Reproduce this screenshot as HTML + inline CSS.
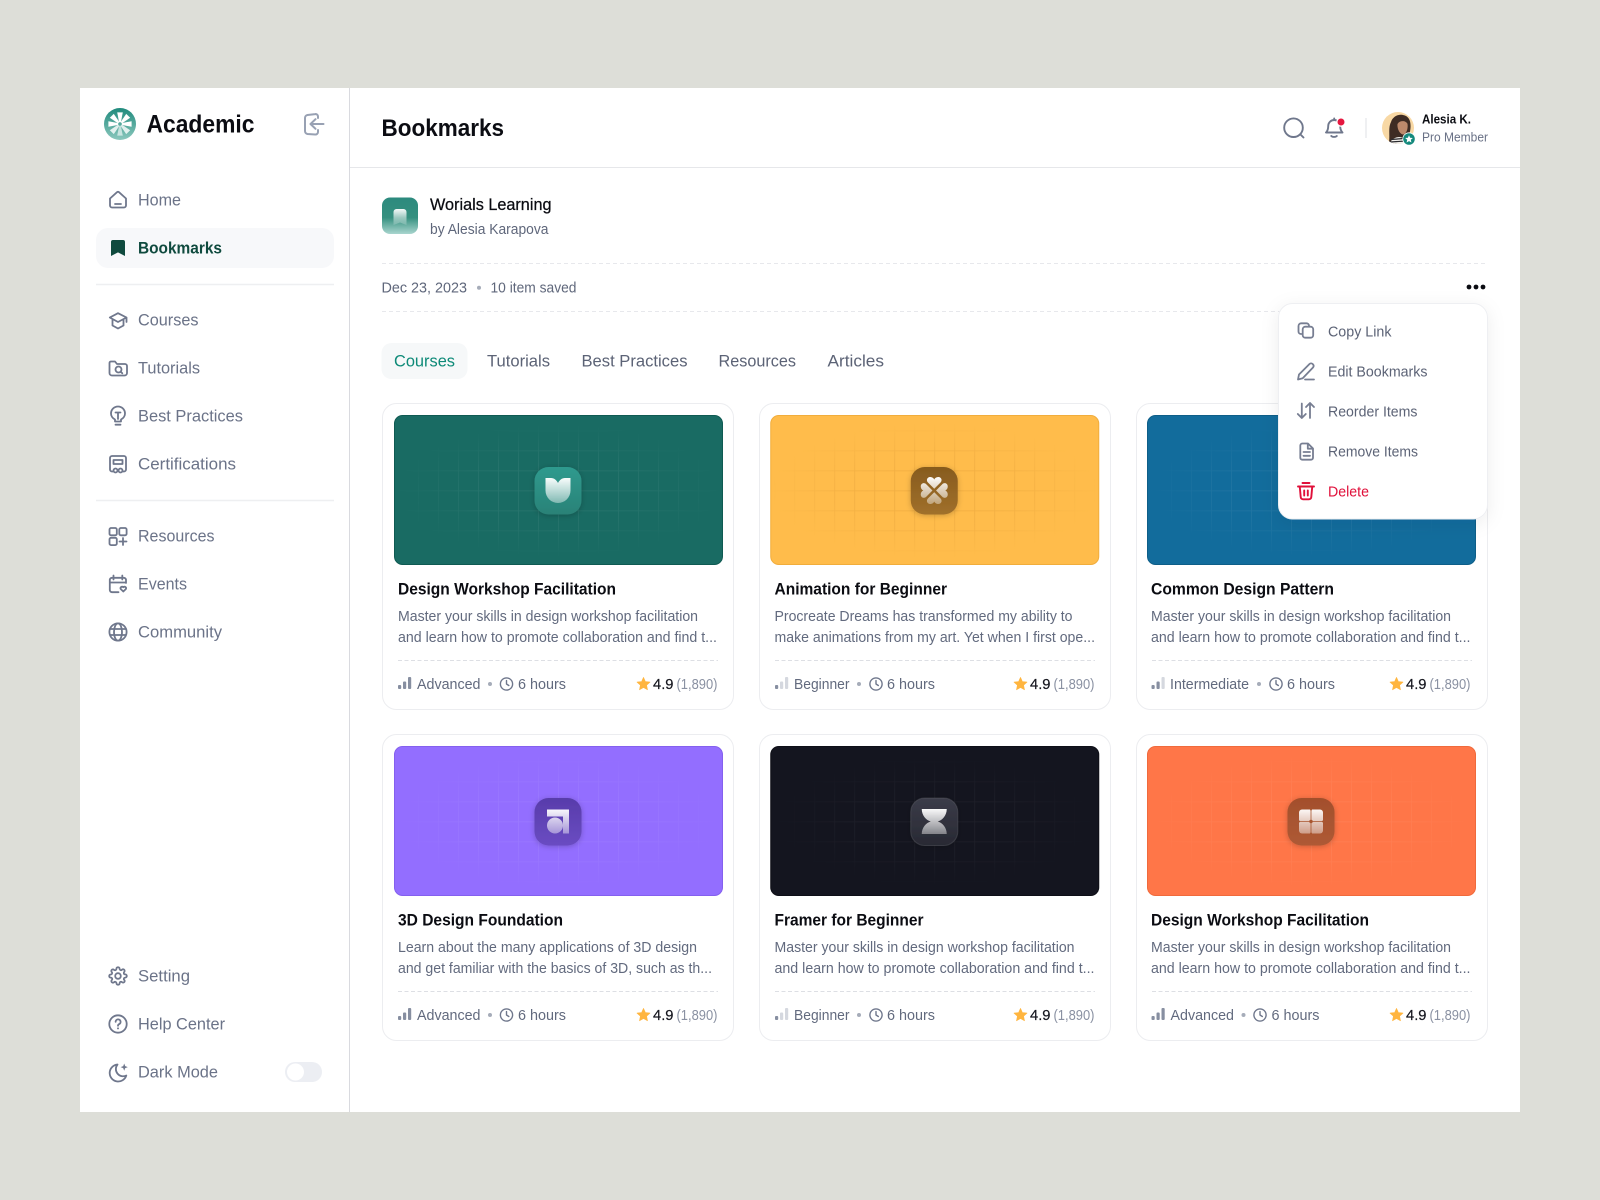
<!DOCTYPE html>
<html lang="en">
<head>
<meta charset="utf-8">
<title>Academic - Bookmarks</title>
<style>
html,body{margin:0;padding:0;background:#DDDED8;width:1600px;height:1200px;overflow:hidden}
svg{display:block}
text{font-family:"Liberation Sans",Arial,sans-serif}
.nav{font-size:16.5px;fill:#6B7388}
.ni{fill:none;stroke:#6F778C;stroke-width:1.8;stroke-linecap:round;stroke-linejoin:round}
.t{font-size:16.5px;font-weight:700;fill:#0B0C12}
.d{font-size:14.5px;fill:#626A7E}
.m{font-size:14.5px;fill:#626A7E}
.r{font-size:14.5px;fill:#15161E;stroke:#15161E;stroke-width:.2}
.c{font-size:14.5px;fill:#8A91A2}
.tab{font-size:16.5px;fill:#5C6376}
.dd{font-size:14.5px;fill:#5C6376}
</style>
</head>
<body>
<svg width="1600" height="1200" viewBox="0 0 1600 1200" xmlns="http://www.w3.org/2000/svg">
<defs>
  <pattern id="gridP" patternUnits="userSpaceOnUse" width="20" height="20" x="176" y="87.5">
    <path d="M0 0V20M0 0H20" fill="none" stroke="#fff" stroke-width="1.6"/>
  </pattern>
  <pattern id="gridY" patternUnits="userSpaceOnUse" width="20" height="20" x="176" y="87.5">
    <path d="M0 0V20M0 0H20" fill="none" stroke="#B9761F" stroke-width="1.6"/>
  </pattern>
  <radialGradient id="gridG" gradientUnits="userSpaceOnUse" cx="0" cy="0" r="1" gradientTransform="translate(176 87.5) scale(165 68)">
    <stop offset="0" stop-color="#fff" stop-opacity="1"/>
    <stop offset=".55" stop-color="#fff" stop-opacity=".7"/>
    <stop offset="1" stop-color="#fff" stop-opacity="0"/>
  </radialGradient>
  <mask id="gridM" maskUnits="userSpaceOnUse" x="12" y="12" width="329" height="150">
    <rect x="12" y="12" width="329" height="150" fill="url(#gridG)"/>
  </mask>
  <linearGradient id="fadeG" gradientUnits="userSpaceOnUse" x1="0" y1="-14" x2="0" y2="14">
    <stop offset="0" stop-color="#fff"/>
    <stop offset="1" stop-color="#fff" stop-opacity=".38"/>
  </linearGradient>
  <mask id="fade" maskUnits="userSpaceOnUse" x="-18" y="-18" width="36" height="36">
    <rect x="-18" y="-18" width="36" height="36" fill="url(#fadeG)"/>
  </mask>
  <linearGradient id="logoG" x1="0" y1="0" x2="0" y2="1">
    <stop offset="0" stop-color="#1F8A7C"/><stop offset="1" stop-color="#8CC8BE"/>
  </linearGradient>
  <linearGradient id="wsG" x1="0" y1="0" x2="0" y2="1">
    <stop offset="0" stop-color="#2C8A7E"/><stop offset=".55" stop-color="#35907F"/><stop offset="1" stop-color="#A9D5CE"/>
  </linearGradient>
  <linearGradient id="wsI" x1="0" y1="0" x2="0" y2="1">
    <stop offset="0" stop-color="#fff" stop-opacity=".95"/><stop offset="1" stop-color="#fff" stop-opacity=".15"/>
  </linearGradient>
  <linearGradient id="bT" x1="0" y1="0" x2="0" y2="1"><stop offset="0" stop-color="#2E9A8E"/><stop offset="1" stop-color="#2B8277"/></linearGradient>
  <linearGradient id="bY" x1="0" y1="0" x2="0" y2="1"><stop offset="0" stop-color="#875B1E"/><stop offset="1" stop-color="#A0702B"/></linearGradient>
  <linearGradient id="bP" x1="0" y1="0" x2="0" y2="1"><stop offset="0" stop-color="#583CAB"/><stop offset="1" stop-color="#6A4CC2"/></linearGradient>
  <linearGradient id="bK" x1="0" y1="0" x2="0" y2="1"><stop offset="0" stop-color="#3B3C49"/><stop offset="1" stop-color="#282933"/></linearGradient>
  <linearGradient id="bO" x1="0" y1="0" x2="0" y2="1"><stop offset="0" stop-color="#A34F2C"/><stop offset="1" stop-color="#AE5A35"/></linearGradient>
  <filter id="ib" x="-40%" y="-40%" width="180%" height="180%"><feDropShadow dx="0" dy="1" stdDeviation="3" flood-color="#000" flood-opacity=".22"/></filter>
  <filter id="ddS" x="-20%" y="-20%" width="140%" height="140%"><feDropShadow dx="0" dy="4" stdDeviation="9" flood-color="#1A2233" flood-opacity=".07"/></filter>
  <clipPath id="avC"><circle cx="1398" cy="128" r="16"/></clipPath>

  <g id="star"><path d="M0-6.6 1.9-2.4 6.5-1.9 3.1 1.2 4 5.8 0 3.5-4 5.8-3.1 1.2-6.5-1.9-1.9-2.4Z" fill="#FFB53F" stroke="#FFB53F" stroke-width=".6" stroke-linejoin="round"/></g>
  <g id="clock" fill="none" stroke="#6F778C" stroke-width="1.4" stroke-linecap="round" stroke-linejoin="round"><circle r="6.1"/><path d="M0-3.4V0L2.3 1.5"/></g>
  <g id="b3"><rect x="0" y="8" width="3.2" height="4" rx="1" fill="#878FA1"/><rect x="5" y="4.5" width="3.2" height="7.5" rx="1" fill="#878FA1"/><rect x="10" y="0" width="3.2" height="12" rx="1" fill="#878FA1"/></g>
  <g id="b1"><rect x="0" y="8" width="3.2" height="4" rx="1" fill="#878FA1"/><rect x="5" y="4.5" width="3.2" height="7.5" rx="1" fill="#D5D8DF"/><rect x="10" y="0" width="3.2" height="12" rx="1" fill="#D5D8DF"/></g>
  <g id="b2"><rect x="0" y="8" width="3.2" height="4" rx="1" fill="#878FA1"/><rect x="5" y="4.5" width="3.2" height="7.5" rx="1" fill="#878FA1"/><rect x="10" y="0" width="3.2" height="12" rx="1" fill="#D5D8DF"/></g>

  <g id="frame">
    <rect x=".5" y=".5" width="351" height="306" rx="14" fill="#fff" stroke="#ECEDF0"/>
    <path d="M16 257.5H336" stroke="#DDDFE4" stroke-dasharray="4 2.5" fill="none"/>
  </g>
  <g id="gridL"><rect x="12" y="12" width="329" height="150" fill="url(#gridP)" mask="url(#gridM)" opacity=".085"/></g>
  <g id="gridLY"><rect x="12" y="12" width="329" height="150" fill="url(#gridY)" mask="url(#gridM)" opacity=".26"/></g>
</defs>

<rect width="1600" height="1200" fill="#DDDED8"/>
<rect x="80" y="88" width="1440" height="1024" fill="#fff"/>
<path d="M349.5 88V1112" stroke="#D9DADF"/>
<path d="M350 167.5H1520" stroke="#E6E7EA"/>

<!-- Logo -->
<circle cx="120" cy="124" r="16" fill="url(#logoG)"/>
<g transform="translate(120 124)" fill="#fff">
  <path d="M-.9-1.8-2.8-11.6H2.8L.9-1.8Z"/>
  <path d="M-.9-1.8-2.8-11.6H2.8L.9-1.8Z" transform="rotate(45)"/>
  <path d="M-.9-1.8-2.8-11.6H2.8L.9-1.8Z" transform="rotate(90)"/>
  <path d="M-.9-1.8-2.8-11.6H2.8L.9-1.8Z" transform="rotate(135)" opacity=".8"/>
  <path d="M-.9-1.8-2.8-11.6H2.8L.9-1.8Z" transform="rotate(180)" opacity=".6"/>
  <path d="M-.9-1.8-2.8-11.6H2.8L.9-1.8Z" transform="rotate(225)" opacity=".8"/>
  <path d="M-.9-1.8-2.8-11.6H2.8L.9-1.8Z" transform="rotate(270)"/>
  <path d="M-.9-1.8-2.8-11.6H2.8L.9-1.8Z" transform="rotate(315)"/>
</g>
<text x="146.5" y="132.5" font-size="25" font-weight="700" fill="#0B0C12" textLength="108" lengthAdjust="spacingAndGlyphs">Academic</text>
<g fill="none" stroke="#98A1B3" stroke-width="2" stroke-linecap="round" stroke-linejoin="round">
  <path d="M318 118V116.5a2.4 2.4 0 0 0-2.8-2.4L307.5 115a3 3 0 0 0-2.5 3v13a3 3 0 0 0 2.5 3l7.7 .5a2.6 2.6 0 0 0 2.8-2.5V130"/>
  <path d="M323.5 124H310.5M315.5 119.2l-5 4.8 5 4.8"/>
</g>

<!-- Nav -->
<rect x="96" y="228" width="238" height="40" rx="12" fill="#F7F8FA"/>
<path d="M96 284.5H334M96 500.5H334" stroke="#EEEFF1" stroke-width="1.4"/>

<path class="ni" d="M110 198.5 117 192.2a1.6 1.6 0 0 1 2 0L126 198.5V205.5a2 2 0 0 1-2 2H112a2 2 0 0 1-2-2ZM115 204H121"/>
<text class="nav" x="138" y="205.5" textLength="43" lengthAdjust="spacingAndGlyphs">Home</text>

<path d="M111 242a2 2 0 0 1 2-2h10a2 2 0 0 1 2 2v14l-7-3.6-7 3.6Z" fill="#0F4A3E"/>
<text x="138" y="253.5" font-size="16.5" font-weight="700" fill="#0F4A3E" textLength="84" lengthAdjust="spacingAndGlyphs">Bookmarks</text>

<g class="ni"><path d="M118 313.2 126.5 317.5 118 322 109.8 317.5ZM112.5 320V325.5L118 328.5 123.5 325.5V320M126.5 317.5V322"/></g>
<text class="nav" x="138" y="325.5" textLength="60.5" lengthAdjust="spacingAndGlyphs">Courses</text>

<g class="ni"><path d="M109.5 363a1.5 1.5 0 0 1 1.5-1.5h4l2 2.5h8a2 2 0 0 1 2 2v7a2.5 2.5 0 0 1-2.5 2.5h-12.5a2.5 2.5 0 0 1-2.5-2.5Z"/><circle cx="118.5" cy="369.5" r="3"/><path d="M120.7 371.7 122.3 373.3"/></g>
<text class="nav" x="138" y="373.5" textLength="62" lengthAdjust="spacingAndGlyphs">Tutorials</text>

<g class="ni"><path d="M115 421.5V419.5C112.5 418.3 111 415.8 111 413.5a7 7 0 0 1 14 0C125 415.8 123.5 418.3 121 419.5V421.5ZM115.5 424.7H120.5M115.5 412.5H120.5M118 412.5V419"/></g>
<text class="nav" x="138" y="421.5" textLength="105" lengthAdjust="spacingAndGlyphs">Best Practices</text>

<g class="ni"><path d="M113 471.5H112a2 2 0 0 1-2-2V458a2 2 0 0 1 2-2H124a2 2 0 0 1 2 2V469.5a2 2 0 0 1-2 2H123"/><path d="M113.5 460H122.5V464H113.5Z"/><circle cx="115.5" cy="470.5" r="2"/><circle cx="120.5" cy="470.5" r="2"/></g>
<text class="nav" x="138" y="469.5" textLength="98" lengthAdjust="spacingAndGlyphs">Certifications</text>

<g class="ni"><rect x="109.5" y="528" width="7.3" height="7.3" rx="1.6"/><rect x="119.3" y="528" width="7.3" height="7.3" rx="1.6"/><rect x="109.5" y="537.8" width="7.3" height="7.3" rx="1.6"/><path d="M123 538V545M119.5 541.5H126.5"/></g>
<text class="nav" x="138" y="541.5" textLength="76.5" lengthAdjust="spacingAndGlyphs">Resources</text>

<g class="ni"><path d="M126 583V580a2.2 2.2 0 0 0-2.2-2.2H112a2.2 2.2 0 0 0-2.2 2.2V590a2.2 2.2 0 0 0 2.2 2.2H118.5M113.5 575.5V579.5M122.3 575.5V579.5M110 582.5H126"/><path d="M123.3 591.5 120.7 589a1.6 1.6 0 0 1 2.6-1.8 1.6 1.6 0 0 1 2.6 1.8Z"/></g>
<text class="nav" x="138" y="589.5" textLength="49" lengthAdjust="spacingAndGlyphs">Events</text>

<g class="ni"><circle cx="118" cy="632" r="8.6"/><ellipse cx="118" cy="632" rx="4" ry="8.6"/><path d="M110.3 629H125.7M110.3 635H125.7"/></g>
<text class="nav" x="138" y="637.5" textLength="84" lengthAdjust="spacingAndGlyphs">Community</text>

<g class="ni"><circle cx="118" cy="976" r="2.8"/><path transform="translate(108.4 966.4) scale(.8)" stroke-width="2.2" d="M19.4 15a1.65 1.65 0 0 0 .33 1.82l.06.06a2 2 0 0 1 0 2.83 2 2 0 0 1-2.83 0l-.06-.06a1.65 1.65 0 0 0-1.82-.33 1.65 1.65 0 0 0-1 1.51V21a2 2 0 0 1-2 2 2 2 0 0 1-2-2v-.09A1.65 1.65 0 0 0 9 19.4a1.65 1.65 0 0 0-1.82.33l-.06.06a2 2 0 0 1-2.83 0 2 2 0 0 1 0-2.83l.06-.06a1.65 1.65 0 0 0 .33-1.82 1.65 1.65 0 0 0-1.51-1H3a2 2 0 0 1-2-2 2 2 0 0 1 2-2h.09A1.65 1.65 0 0 0 4.6 9a1.65 1.65 0 0 0-.33-1.82l-.06-.06a2 2 0 0 1 0-2.83 2 2 0 0 1 2.83 0l.06.06a1.65 1.65 0 0 0 1.82.33H9a1.65 1.65 0 0 0 1-1.51V3a2 2 0 0 1 2-2 2 2 0 0 1 2 2v.09a1.65 1.65 0 0 0 1 1.51 1.65 1.65 0 0 0 1.82-.33l.06-.06a2 2 0 0 1 2.83 0 2 2 0 0 1 0 2.83l-.06.06a1.65 1.65 0 0 0-.33 1.82V9a1.65 1.65 0 0 0 1.51 1H21a2 2 0 0 1 2 2 2 2 0 0 1-2 2h-.09a1.65 1.65 0 0 0-1.51 1z"/></g>
<text class="nav" x="138" y="981.5" textLength="52" lengthAdjust="spacingAndGlyphs">Setting</text>

<g class="ni"><circle cx="118" cy="1024" r="8.7"/><path d="M115.6 1021.8a2.5 2.5 0 1 1 3.6 2.3c-.8.4-1.2 1-1.2 1.7"/></g>
<circle cx="118" cy="1028.4" r="1" fill="#6F778C"/>
<text class="nav" x="138" y="1029.5" textLength="87" lengthAdjust="spacingAndGlyphs">Help Center</text>

<g class="ni"><path d="M117.5 1064.5a8.5 8.5 0 1 0 8.8 11 7.2 7.2 0 0 1-8.8-11Z"/></g>
<path d="M124.2 1063.5 125.2 1066.1 127.8 1067.1 125.2 1068.1 124.2 1070.7 123.2 1068.1 120.6 1067.1 123.2 1066.1Z" fill="#6F778C"/>
<text class="nav" x="138" y="1077.5" textLength="80" lengthAdjust="spacingAndGlyphs">Dark Mode</text>
<rect x="285" y="1062" width="37" height="20" rx="10" fill="#ECEEF3"/>
<circle cx="295.5" cy="1072" r="8.5" fill="#fff"/>

<!-- Header -->
<text x="381.5" y="135.8" font-size="24.5" font-weight="700" fill="#0B0C12" textLength="122.5" lengthAdjust="spacingAndGlyphs">Bookmarks</text>
<g fill="none" stroke="#6F778C" stroke-width="1.9" stroke-linecap="round" stroke-linejoin="round">
  <circle cx="1293.5" cy="127.7" r="9.3"/><path d="M1300.5 134.5 1303.5 137.5"/>
  <path d="M1326 132.5H1342.5C1341 131 1340.2 128.8 1340.2 126a6 6 0 0 0-12 0C1328.2 128.8 1327.5 131 1326 132.5ZM1331.3 136C1332.5 137.3 1335.5 137.3 1336.8 136M1334.2 120V118.5"/>
</g>
<circle cx="1341" cy="122" r="4.8" fill="#fff"/>
<circle cx="1341" cy="122" r="3.5" fill="#E5173F"/>
<path d="M1366 118V138" stroke="#E8E9EC" stroke-width="1.4"/>

<!-- Avatar -->
<g clip-path="url(#avC)">
  <rect x="1382" y="112" width="32" height="32" fill="#F8D8A4"/>
  <path d="M1389 142C1390 134 1388 128 1391 122C1393 116 1399 114 1403 115C1409 116 1411 121 1410.5 128C1410 133 1409 136 1406 137L1396 144Z" fill="#3E2C24"/>
  <path d="M1397.5 124C1400 120 1406 120.5 1407.5 124C1408.3 129 1406 134.5 1403 134.5C1399.5 134 1397 128.5 1397.5 124Z" fill="#BD8A6C"/>
  <path d="M1389 146C1390 140 1394 137.5 1399 137C1403 137 1406 140 1407 146Z" fill="#F2F0EC"/>
  <path d="M1391 139.5 1404 138.5M1390 142 1406 141" stroke="#2B2B2F" stroke-width="1.2"/>
</g>
<circle cx="1409" cy="139" r="6.2" fill="#14897C" stroke="#fff" stroke-width=".8"/>
<path d="M1409 135.2 1410.1 137.7 1412.8 138 1410.8 139.8 1411.4 142.5 1409 141.1 1406.6 142.5 1407.2 139.8 1405.2 138 1407.9 137.7Z" fill="#fff"/>
<text x="1422" y="123.5" font-size="12.5" font-weight="700" fill="#0B0C12" textLength="49" lengthAdjust="spacingAndGlyphs">Alesia K.</text>
<text x="1422" y="141.5" font-size="12.5" fill="#697186" textLength="66" lengthAdjust="spacingAndGlyphs">Pro Member</text>

<!-- Workspace -->
<rect x="382" y="197.5" width="36" height="36.5" rx="8" fill="url(#wsG)"/>
<path d="M393.5 212a3 3 0 0 1 3-3h7a3 3 0 0 1 3 3v13l-6.5-2.5-6.5 2.5Z" fill="url(#wsI)"/>
<text x="430" y="209.8" font-size="16.5" fill="#0B0C12" stroke="#0B0C12" stroke-width=".25" textLength="121.5" lengthAdjust="spacingAndGlyphs">Worials Learning</text>
<text x="430" y="234" font-size="14.5" fill="#5F677B" textLength="118.5" lengthAdjust="spacingAndGlyphs">by Alesia Karapova</text>
<path d="M382 263.5H1488M382 311.5H1488" stroke="#E7E8EC" stroke-dasharray="4 3" fill="none"/>
<text x="381.5" y="292.5" font-size="14.5" fill="#5F677B" textLength="85.5" lengthAdjust="spacingAndGlyphs">Dec 23, 2023</text>
<circle cx="479" cy="287.7" r="2" fill="#A6ACB9"/>
<text x="490.5" y="292.5" font-size="14.5" fill="#5F677B" textLength="86" lengthAdjust="spacingAndGlyphs">10 item saved</text>
<circle cx="1469" cy="287" r="2.4" fill="#0B0C12"/><circle cx="1476" cy="287" r="2.4" fill="#0B0C12"/><circle cx="1483" cy="287" r="2.4" fill="#0B0C12"/>

<!-- Tabs -->
<rect x="381.5" y="343" width="86" height="36" rx="10" fill="#F6F8F9"/>
<text x="394" y="366.5" font-size="16.5" fill="#0E8A78" textLength="61" lengthAdjust="spacingAndGlyphs">Courses</text>
<text class="tab" x="487" y="366.5" textLength="63" lengthAdjust="spacingAndGlyphs">Tutorials</text>
<text class="tab" x="581.5" y="366.5" textLength="106" lengthAdjust="spacingAndGlyphs">Best Practices</text>
<text class="tab" x="718.5" y="366.5" textLength="77.5" lengthAdjust="spacingAndGlyphs">Resources</text>
<text class="tab" x="827.5" y="366.5" textLength="56.5" lengthAdjust="spacingAndGlyphs">Articles</text>

<!-- Card 1 -->
<g transform="translate(382 403)">
  <use href="#frame"/>
  <rect x="12.5" y="12.5" width="328" height="149" rx="8" fill="#196B63" stroke="#0F5A52"/>
  <use href="#gridL"/>
  <rect x="152.5" y="64" width="47" height="47.5" rx="14" fill="url(#bT)" filter="url(#ib)"/>
  <g transform="translate(176 87.5)" mask="url(#fade)"><path d="M-12.5-12.5H-7C-4-12.5-1.5-10.5 0-7.5 1.5-10.5 4-12.5 7-12.5H12.5V0A12.5 12.5 0 0 1-12.5 0Z" fill="#fff"/></g>
  <text class="t" x="16" y="191.5" textLength="218" lengthAdjust="spacingAndGlyphs">Design Workshop Facilitation</text>
  <text class="d" x="16" y="218" textLength="300" lengthAdjust="spacingAndGlyphs">Master your skills in design workshop facilitation</text>
  <text class="d" x="16" y="239" textLength="319" lengthAdjust="spacingAndGlyphs">and learn how to promote collaboration and find t...</text>
  <use href="#b3" x="16" y="274"/>
  <text class="m" x="35" y="286" textLength="63.5" lengthAdjust="spacingAndGlyphs">Advanced</text>
  <circle cx="108" cy="281" r="2" fill="#A6ACB9"/>
  <use href="#clock" x="124.5" y="281"/>
  <text class="m" x="136" y="286" textLength="48" lengthAdjust="spacingAndGlyphs">6 hours</text>
  <use href="#star" x="261.5" y="281"/>
  <text class="r" x="271" y="286" textLength="20.5" lengthAdjust="spacingAndGlyphs">4.9</text>
  <text class="c" x="294.5" y="286" textLength="41" lengthAdjust="spacingAndGlyphs">(1,890)</text>
</g>

<!-- Card 2 -->
<g transform="translate(759 403)">
  <use href="#frame"/>
  <g transform="translate(-.75 0)">
    <rect x="12.5" y="12.5" width="328" height="149" rx="8" fill="#FFBC4B" stroke="#F1AD3C"/>
    <use href="#gridLY"/>
    <rect x="152.5" y="64" width="47" height="47.5" rx="14" fill="url(#bY)" filter="url(#ib)"/>
    <g transform="translate(176 87.5)" mask="url(#fade)" fill="#fff">
      <path d="M0-1.8-6.3-8C-8.3-10-7.3-13.5-4-13.5-2-13.5-.6-12.4 0-11 .6-12.4 2-13.5 4-13.5 7.3-13.5 8.3-10 6.3-8Z"/>
      <path d="M0-1.8-6.3-8C-8.3-10-7.3-13.5-4-13.5-2-13.5-.6-12.4 0-11 .6-12.4 2-13.5 4-13.5 7.3-13.5 8.3-10 6.3-8Z" transform="rotate(90)"/>
      <path d="M0-1.8-6.3-8C-8.3-10-7.3-13.5-4-13.5-2-13.5-.6-12.4 0-11 .6-12.4 2-13.5 4-13.5 7.3-13.5 8.3-10 6.3-8Z" transform="rotate(180)"/>
      <path d="M0-1.8-6.3-8C-8.3-10-7.3-13.5-4-13.5-2-13.5-.6-12.4 0-11 .6-12.4 2-13.5 4-13.5 7.3-13.5 8.3-10 6.3-8Z" transform="rotate(270)"/>
    </g>
  </g>
  <text class="t" x="15.5" y="191.5" textLength="172.5" lengthAdjust="spacingAndGlyphs">Animation for Beginner</text>
  <text class="d" x="15.5" y="218" textLength="298" lengthAdjust="spacingAndGlyphs">Procreate Dreams has transformed my ability to</text>
  <text class="d" x="15.5" y="239" textLength="320.5" lengthAdjust="spacingAndGlyphs">make animations from my art. Yet when I first ope...</text>
  <use href="#b1" x="16" y="274"/>
  <text class="m" x="35" y="286" textLength="55.5" lengthAdjust="spacingAndGlyphs">Beginner</text>
  <circle cx="100" cy="281" r="2" fill="#A6ACB9"/>
  <use href="#clock" x="117" y="281"/>
  <text class="m" x="128" y="286" textLength="48" lengthAdjust="spacingAndGlyphs">6 hours</text>
  <use href="#star" x="261.5" y="281"/>
  <text class="r" x="271" y="286" textLength="20.5" lengthAdjust="spacingAndGlyphs">4.9</text>
  <text class="c" x="294.5" y="286" textLength="41" lengthAdjust="spacingAndGlyphs">(1,890)</text>
</g>

<!-- Card 3 -->
<g transform="translate(1136 403)">
  <use href="#frame"/>
  <g transform="translate(-1 0)">
    <rect x="12.5" y="12.5" width="328" height="149" rx="8" fill="#126C9C" stroke="#0E5E88"/>
    <use href="#gridL"/>
  </g>
  <text class="t" x="15" y="191.5" textLength="183" lengthAdjust="spacingAndGlyphs">Common Design Pattern</text>
  <text class="d" x="15" y="218" textLength="300" lengthAdjust="spacingAndGlyphs">Master your skills in design workshop facilitation</text>
  <text class="d" x="15" y="239" textLength="319.5" lengthAdjust="spacingAndGlyphs">and learn how to promote collaboration and find t...</text>
  <use href="#b2" x="15.5" y="274"/>
  <text class="m" x="34" y="286" textLength="79" lengthAdjust="spacingAndGlyphs">Intermediate</text>
  <circle cx="123" cy="281" r="2" fill="#A6ACB9"/>
  <use href="#clock" x="140" y="281"/>
  <text class="m" x="151" y="286" textLength="48" lengthAdjust="spacingAndGlyphs">6 hours</text>
  <use href="#star" x="260.5" y="281"/>
  <text class="r" x="270" y="286" textLength="20.5" lengthAdjust="spacingAndGlyphs">4.9</text>
  <text class="c" x="293.5" y="286" textLength="41" lengthAdjust="spacingAndGlyphs">(1,890)</text>
</g>

<!-- Card 4 -->
<g transform="translate(382 734)">
  <use href="#frame"/>
  <rect x="12.5" y="12.5" width="328" height="149" rx="8" fill="#936EFF" stroke="#8460EE"/>
  <use href="#gridL"/>
  <rect x="152.5" y="64" width="47" height="47.5" rx="14" fill="url(#bP)" filter="url(#ib)"/>
  <g transform="translate(176 87.5)" mask="url(#fade)" fill="#fff">
    <path d="M-11-12H11V12H5V-5H-11Z"/><circle cx="-3" cy="4" r="8"/>
  </g>
  <text class="t" x="16" y="191.5" textLength="165" lengthAdjust="spacingAndGlyphs">3D Design Foundation</text>
  <text class="d" x="16" y="218" textLength="299" lengthAdjust="spacingAndGlyphs">Learn about the many applications of 3D design</text>
  <text class="d" x="16" y="239" textLength="314" lengthAdjust="spacingAndGlyphs">and get familiar with the basics of 3D, such as th...</text>
  <use href="#b3" x="16" y="274"/>
  <text class="m" x="35" y="286" textLength="63.5" lengthAdjust="spacingAndGlyphs">Advanced</text>
  <circle cx="108" cy="281" r="2" fill="#A6ACB9"/>
  <use href="#clock" x="124.5" y="281"/>
  <text class="m" x="136" y="286" textLength="48" lengthAdjust="spacingAndGlyphs">6 hours</text>
  <use href="#star" x="261.5" y="281"/>
  <text class="r" x="271" y="286" textLength="20.5" lengthAdjust="spacingAndGlyphs">4.9</text>
  <text class="c" x="294.5" y="286" textLength="41" lengthAdjust="spacingAndGlyphs">(1,890)</text>
</g>

<!-- Card 5 -->
<g transform="translate(759 734)">
  <use href="#frame"/>
  <g transform="translate(-.75 0)">
    <rect x="12.5" y="12.5" width="328" height="149" rx="8" fill="#14151F" stroke="#0E0F17"/>
    <g opacity=".7"><use href="#gridL"/></g>
    <rect x="152.5" y="64" width="47" height="47.5" rx="14" fill="url(#bK)" stroke="#fff" stroke-opacity=".1" filter="url(#ib)"/>
    <g transform="translate(176 87.5)" mask="url(#fade)" fill="#fff">
      <path d="M-12.5-12.5H12.5C12.5-6 8-1.2 3.5 0 8 1.2 12.5 6 12.5 12.5H-12.5C-12.5 6-8 1.2-3.5 0-8-1.2-12.5-6-12.5-12.5Z"/>
    </g>
  </g>
  <text class="t" x="15.5" y="191.5" textLength="149" lengthAdjust="spacingAndGlyphs">Framer for Beginner</text>
  <text class="d" x="15.5" y="218" textLength="300" lengthAdjust="spacingAndGlyphs">Master your skills in design workshop facilitation</text>
  <text class="d" x="15.5" y="239" textLength="320" lengthAdjust="spacingAndGlyphs">and learn how to promote collaboration and find t...</text>
  <use href="#b1" x="16" y="274"/>
  <text class="m" x="35" y="286" textLength="55.5" lengthAdjust="spacingAndGlyphs">Beginner</text>
  <circle cx="100" cy="281" r="2" fill="#A6ACB9"/>
  <use href="#clock" x="117" y="281"/>
  <text class="m" x="128" y="286" textLength="48" lengthAdjust="spacingAndGlyphs">6 hours</text>
  <use href="#star" x="261.5" y="281"/>
  <text class="r" x="271" y="286" textLength="20.5" lengthAdjust="spacingAndGlyphs">4.9</text>
  <text class="c" x="294.5" y="286" textLength="41" lengthAdjust="spacingAndGlyphs">(1,890)</text>
</g>

<!-- Card 6 -->
<g transform="translate(1136 734)">
  <use href="#frame"/>
  <g transform="translate(-1 0)">
    <rect x="12.5" y="12.5" width="328" height="149" rx="8" fill="#FF7648" stroke="#F06A3C"/>
    <use href="#gridL"/>
    <rect x="152.5" y="64" width="47" height="47.5" rx="14" fill="url(#bO)" filter="url(#ib)"/>
    <g transform="translate(176 87.5)">
      <g mask="url(#fade)"><rect x="-12" y="-12" width="24" height="24" rx="3" fill="#fff"/></g>
      <path d="M0-12V12M-12 0H12" stroke="#A9552F" stroke-width=".8"/>
      <circle r="1.7" fill="#A9552F"/>
      <circle cx="0" cy="-12" r="1" fill="#A9552F"/><circle cx="0" cy="12" r="1" fill="#A9552F"/>
      <circle cx="-12" cy="0" r="1" fill="#A9552F"/><circle cx="12" cy="0" r="1" fill="#A9552F"/>
    </g>
  </g>
  <text class="t" x="15" y="191.5" textLength="218" lengthAdjust="spacingAndGlyphs">Design Workshop Facilitation</text>
  <text class="d" x="15" y="218" textLength="300" lengthAdjust="spacingAndGlyphs">Master your skills in design workshop facilitation</text>
  <text class="d" x="15" y="239" textLength="319.5" lengthAdjust="spacingAndGlyphs">and learn how to promote collaboration and find t...</text>
  <use href="#b3" x="15.5" y="274"/>
  <text class="m" x="34.5" y="286" textLength="63.5" lengthAdjust="spacingAndGlyphs">Advanced</text>
  <circle cx="107.5" cy="281" r="2" fill="#A6ACB9"/>
  <use href="#clock" x="124" y="281"/>
  <text class="m" x="135.5" y="286" textLength="48" lengthAdjust="spacingAndGlyphs">6 hours</text>
  <use href="#star" x="260.5" y="281"/>
  <text class="r" x="270" y="286" textLength="20.5" lengthAdjust="spacingAndGlyphs">4.9</text>
  <text class="c" x="293.5" y="286" textLength="41" lengthAdjust="spacingAndGlyphs">(1,890)</text>
</g>

<!-- Dropdown -->
<rect x="1278.5" y="303.5" width="209" height="215.5" rx="14" fill="#fff" stroke="#EEEFF2" filter="url(#ddS)"/>
<g fill="none" stroke="#777E92" stroke-width="1.8" stroke-linecap="round" stroke-linejoin="round">
  <path d="M1301.5 334H1301a2.5 2.5 0 0 1-2.5-2.5V326a2.7 2.7 0 0 1 2.7-2.7H1306.5a2.5 2.5 0 0 1 2.5 2.2"/>
  <rect x="1302.7" y="326.7" width="10.5" height="11" rx="2.6"/>
  <path d="M1298 379.5 1299 374.5 1309.5 364a2.2 2.2 0 0 1 3.1 0L1313 364.4a2.2 2.2 0 0 1 0 3.1L1302.7 378.3ZM1305 379.5H1314"/>
  <path d="M1301.8 403.5V418M1297.8 414 1301.8 418 1305.8 414M1310 418V403M1306 407 1310 403 1314 407"/>
  <path d="M1300.3 445.5a2 2 0 0 1 2-2H1308L1313 448.5V457.7a2 2 0 0 1-2 2H1302.3a2 2 0 0 1-2-2ZM1307.8 443.8V448.7H1312.8M1303.5 452H1310M1303.5 455.8H1310"/>
</g>
<g fill="none" stroke="#E0103A" stroke-width="1.9" stroke-linecap="round" stroke-linejoin="round">
  <path d="M1298 486.5H1314M1302.5 483H1309.5M1299.8 487 1300.7 497a2.5 2.5 0 0 0 2.5 2.3H1308.8a2.5 2.5 0 0 0 2.5-2.3L1312.2 487M1304.2 490.5V495.5M1307.8 490.5V495.5"/>
</g>
<text class="dd" x="1328" y="336.5" textLength="63.5" lengthAdjust="spacingAndGlyphs">Copy Link</text>
<text class="dd" x="1328" y="376.5" textLength="99.5" lengthAdjust="spacingAndGlyphs">Edit Bookmarks</text>
<text class="dd" x="1328" y="416.5" textLength="89.5" lengthAdjust="spacingAndGlyphs">Reorder Items</text>
<text class="dd" x="1328" y="456.5" textLength="90" lengthAdjust="spacingAndGlyphs">Remove Items</text>
<text x="1328" y="496.5" font-size="14.5" fill="#E0103A" textLength="41" lengthAdjust="spacingAndGlyphs">Delete</text>
</svg>
</body>
</html>
